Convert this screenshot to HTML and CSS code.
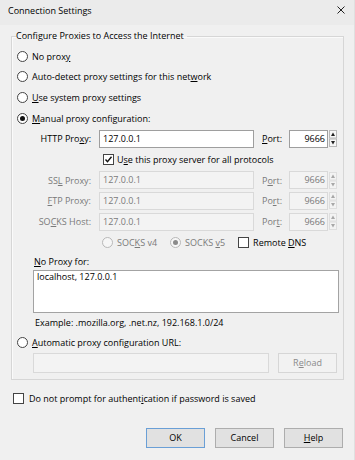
FILE: index.html
```html
<!DOCTYPE html>
<html lang="en">
<head>
    <meta charset="UTF-8">
    <meta name="viewport" content="width=device-width, initial-scale=1.0">
    <title>Connection Settings</title>
    <link rel="stylesheet" href="styles.css">
</head>
<body>
    <div class="window">
        <div class="titlebar">
            <span class="title">Connection Settings</span>
            <svg class="close" width="8" height="8" viewBox="0 0 8 8">
                <path d="M0.5 0.5L7.5 7.5M7.5 0.5L0.5 7.5" stroke="#222" stroke-width="1"/>
            </svg>
        </div>

        <fieldset class="group">
            <legend>Configure Proxies to Access the Internet</legend>

            <div class="opt"><span class="radio"></span><span>No prox<u>y</u></span></div>
            <div class="opt"><span class="radio"></span><span>Auto-detect proxy settings for this net<u>w</u>ork</span></div>
            <div class="opt"><span class="radio"></span><span><u>U</u>se system proxy settings</span></div>
            <div class="opt"><span class="radio checked"></span><span><u>M</u>anual proxy configuration:</span></div>

            <div class="proxy-row">
                <label class="name">HTTP Pro<u>x</u>y:</label>
                <div class="field">127.0.0.1</div>
                <label class="port-name"><u>P</u>ort:</label>
                <div class="field port">9666</div>
                <svg class="spin" width="8" height="17" viewBox="0 0 8 17">
                    <rect class="half" x="0.5" y="0.5" width="7" height="7.5"/>
                    <rect class="half" x="0.5" y="9" width="7" height="7.5"/>
                    <path class="arrow" d="M2 6h4L4 2.5z"/>
                    <path class="arrow" d="M2 11h4L4 14.5z"/>
                </svg>
            </div>

            <div class="check-row">
                <span class="checkbox checked">
                    <svg width="9" height="9" viewBox="0 0 9 9"><path d="M1.5 4.5l2 2.2L7.5 1.8" fill="none" stroke="#111" stroke-width="1.4"/></svg>
                </span>
                <span>U<u>s</u>e this proxy server for all protocols</span>
            </div>

            <div class="proxy-row off">
                <label class="name">SS<u>L</u> Proxy:</label>
                <div class="field">127.0.0.1</div>
                <label class="port-name">P<u>o</u>rt:</label>
                <div class="field port">9666</div>
                <svg class="spin" width="8" height="17" viewBox="0 0 8 17">
                    <rect class="half" x="0.5" y="0.5" width="7" height="7.5"/>
                    <rect class="half" x="0.5" y="9" width="7" height="7.5"/>
                    <path class="arrow" d="M2 6h4L4 2.5z"/>
                    <path class="arrow" d="M2 11h4L4 14.5z"/>
                </svg>
            </div>

            <div class="proxy-row off">
                <label class="name"><u>F</u>TP Proxy:</label>
                <div class="field">127.0.0.1</div>
                <label class="port-name">Po<u>r</u>t:</label>
                <div class="field port">9666</div>
                <svg class="spin" width="8" height="17" viewBox="0 0 8 17">
                    <rect class="half" x="0.5" y="0.5" width="7" height="7.5"/>
                    <rect class="half" x="0.5" y="9" width="7" height="7.5"/>
                    <path class="arrow" d="M2 6h4L4 2.5z"/>
                    <path class="arrow" d="M2 11h4L4 14.5z"/>
                </svg>
            </div>

            <div class="proxy-row off">
                <label class="name">SO<u>C</u>KS Host:</label>
                <div class="field">127.0.0.1</div>
                <label class="port-name">Por<u>t</u>:</label>
                <div class="field port">9666</div>
                <svg class="spin" width="8" height="17" viewBox="0 0 8 17">
                    <rect class="half" x="0.5" y="0.5" width="7" height="7.5"/>
                    <rect class="half" x="0.5" y="9" width="7" height="7.5"/>
                    <path class="arrow" d="M2 6h4L4 2.5z"/>
                    <path class="arrow" d="M2 11h4L4 14.5z"/>
                </svg>
            </div>

            <div class="versions">
                <div class="inline off"><span class="radio"></span><span>SOC<u>K</u>S v4</span></div>
                <div class="inline off"><span class="radio checked"></span><span>SOCKS <u>v</u>5</span></div>
                <div class="inline"><span class="checkbox"></span><span>Remote <u>D</u>NS</span></div>
            </div>

            <div class="noproxy-label"><u>N</u>o Proxy for:</div>
            <div class="textarea">localhost, 127.0.0.1</div>
            <div class="example">Example: .mozilla.org, .net.nz, 192.168.1.0/24</div>

            <div class="opt"><span class="radio"></span><span><u>A</u>utomatic proxy configuration URL:</span></div>
            <div class="url-row">
                <div class="field url off"></div>
                <div class="btn reload">R<u>e</u>load</div>
            </div>
        </fieldset>

        <div class="prompt"><span class="checkbox"></span><span>Do not prompt for authent<u>i</u>cation if password is saved</span></div>

        <div class="buttons">
            <div class="btn default">OK</div>
            <div class="btn">Cancel</div>
            <div class="btn"><u>H</u>elp</div>
        </div>
    </div>
</body>
</html>
```

FILE: styles.css
```css
* {
    margin: 0;
    padding: 0;
    box-sizing: border-box;
}

body {
    font-family: 'Open Sans', 'Noto Sans', sans-serif;
    font-size: 9px;
    color: #000;
    background: #f0f0f0;
}

u {
    text-decoration: underline;
    text-underline-offset: 1px;
}

.window {
    width: 355px;
    height: 460px;
    background: #f0f0f0;
    border-right: 1px solid #e0e0e0;
    overflow: hidden;
}

.titlebar {
    height: 25px;
    background: #ebebeb;
    display: flex;
    justify-content: space-between;
    padding: 0 9px 0 8px;
    line-height: 22px;
}

.close {
    margin-top: 6px;
}

/* group box */
.group {
    margin: 4px 10px 0 11px;
    border: 1px solid #d6d6d6;
    box-shadow: inset 1px 1px 0 #fafafa;
    padding: 3px 6px 6px 4px;
    min-width: 0;
}

.group legend {
    padding: 0 3px 0 0;
    line-height: 14px;
}

.opt {
    display: flex;
    align-items: center;
    height: 20.67px;
}

.radio {
    width: 11px;
    height: 11px;
    border: 1px solid #444;
    border-radius: 50%;
    background: #fff;
    margin: 0 4px 0 1px;
    flex-shrink: 0;
    display: flex;
    align-items: center;
    justify-content: center;
}

.radio.checked::after {
    content: '';
    width: 5px;
    height: 5px;
    border-radius: 50%;
    background: #111;
}

.checkbox {
    width: 11px;
    height: 11px;
    border: 1px solid #444;
    background: #fff;
    margin-right: 4px;
    flex-shrink: 0;
    display: flex;
    align-items: center;
    justify-content: center;
}

/* proxy rows */
.proxy-row {
    display: flex;
    align-items: center;
    height: 20.67px;
}

.name {
    width: 75px;
    text-align: right;
    margin-right: 8px;
}

.field {
    width: 155px;
    height: 18px;
    border: 1px solid #9e9e9e;
    background: #fff;
    padding: 0 3px;
    line-height: 16px;
}

.port-name {
    width: 35px;
    padding-left: 8px;
}

.field.port {
    width: 39px;
    text-align: right;
    padding: 0 2px 0 0;
}

.spin {
    margin-left: 1px;
}

.spin .half {
    fill: #f7f7f7;
    stroke: #b8b8b8;
}

.spin .arrow {
    fill: #222;
}

.off {
    color: #7a7a7a;
}

.off .field {
    background: #f3f3f3;
    border-color: #d9d9d9;
}

.off .spin .half {
    fill: #f3f3f3;
    stroke: #dedede;
}

.off .spin .arrow {
    fill: #a8a8a8;
}

.off .radio {
    border-color: #b8b8b8;
    background: #f6f6f6;
}

.off .radio.checked::after {
    background: #8a8a8a;
}

.check-row {
    display: flex;
    align-items: center;
    height: 20.67px;
    padding-left: 87px;
}

.check-row .checkbox {
    margin-right: 3px;
}

.versions {
    display: flex;
    align-items: center;
    gap: 13px;
    height: 20.67px;
    padding-left: 86px;
}

.versions .radio {
    margin-left: 0;
}

.inline {
    display: flex;
    align-items: center;
}

.versions .checkbox {
    margin-right: 4px;
}

.noproxy-label {
    height: 17px;
    line-height: 17px;
    padding-left: 18px;
}

.textarea {
    margin-left: 17px;
    width: 306px;
    height: 43px;
    border: 1px solid #a3a3a3;
    background: #fff;
    padding: 0 3px;
    line-height: 12px;
}

.example {
    height: 20px;
    line-height: 20px;
    padding-left: 19px;
}

.url-row {
    display: flex;
    align-items: center;
    height: 20px;
    padding-left: 17px;
}

.field.url {
    width: 236px;
    height: 20px;
    background: #f3f3f3;
    border-color: #d9d9d9;
}

/* buttons */
.btn {
    width: 59px;
    height: 20px;
    line-height: 18px;
    text-align: center;
    background: #e1e1e1;
    border: 1px solid #adadad;
}

.btn.default {
    border-color: #6a9fd6;
}

.btn.reload {
    margin-left: 9px;
    background: #f2f2f2;
    border-color: #d6d6d6;
    color: #8a8a8a;
}

.prompt {
    display: flex;
    align-items: center;
    height: 20px;
    margin-top: 8px;
    padding-left: 13px;
}

.prompt .checkbox {
    margin-right: 5px;
}

.buttons {
    display: flex;
    justify-content: flex-end;
    gap: 10px;
    margin-top: 20px;
    padding-right: 11px;
}
```
